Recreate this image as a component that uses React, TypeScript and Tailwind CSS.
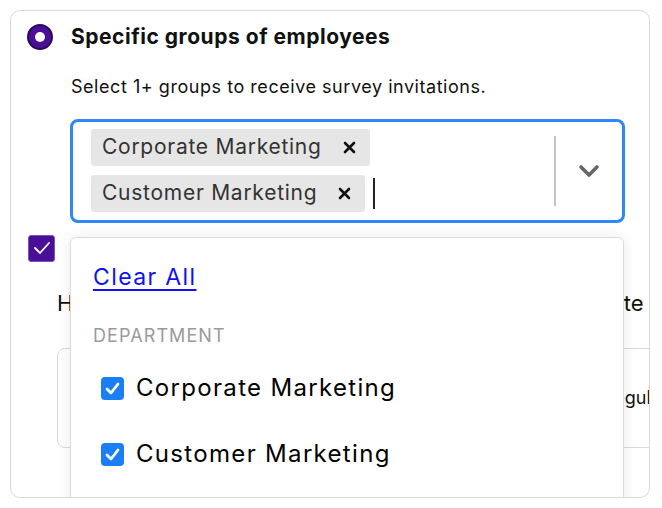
import React from 'react';

const FONT = { fontFamily: 'Inter, "Noto Sans", sans-serif' };

const groups = ['Corporate Marketing', 'Customer Marketing'];

function Chip({ label }: { label: string }) {
  return (
    <div className="flex h-[37px] items-center rounded-[3px] bg-[#e6e6e6] pl-[11px] pr-[14px]">
      <span className="text-[21px] tracking-[0.035em] text-[#333]">{label}</span>
      <svg className="ml-[21px]" width="13" height="13" viewBox="0 0 13 13">
        <path d="M2 2 L11 11 M11 2 L2 11" stroke="#111" strokeWidth="2.6" strokeLinecap="round" />
      </svg>
    </div>
  );
}

function BlueCheck() {
  return (
    <span className="flex h-[23px] w-[23px] items-center justify-center rounded-[4px] bg-[#1a7ef5]">
      <svg width="15" height="13" viewBox="0 0 15 13">
        <path d="M2 7 L6 11 L13 2" fill="none" stroke="#fff" strokeWidth="2.8" strokeLinecap="round" strokeLinejoin="round" />
      </svg>
    </span>
  );
}

function Dropdown() {
  return (
    <div className="absolute left-0 top-[118px] z-10 h-[300px] w-[554px] rounded-t-[6px] border border-[#dcdcdc] bg-white pl-[22px] pt-[22px] shadow-[0_0_14px_rgba(0,0,0,0.09)]">
      <a className="text-[23px] tracking-[0.06em] text-[#1010f0] underline decoration-[2px] underline-offset-[4px]" href="#">
        Clear All
      </a>
      <div className="mt-[28px] text-[18px] tracking-[0.06em] text-[#9a9a9a]">DEPARTMENT</div>
      <div className="mt-[21px] flex flex-col gap-[30px] pl-[8px]">
        {groups.map((g) => (
          <label key={g} className="flex items-center gap-[12px]">
            <BlueCheck />
            <span className="text-[24px] tracking-[0.055em] text-black">{g}</span>
          </label>
        ))}
      </div>
    </div>
  );
}

export default function App() {
  return (
    <div className="h-[508px] w-[662px] bg-white pl-[10px] pt-[10px]" style={FONT}>
      <div className="h-[488px] w-[640px] overflow-hidden rounded-[10px] border border-[#d9d9d9]">
        {/* radio + title */}
        <div className="flex items-center pl-[16px] pt-[10px]">
          <span className="flex h-[26px] w-[26px] items-center justify-center rounded-full border-2 border-[#2b0a5e] bg-[#4a0f96]">
            <span className="h-[10px] w-[10px] rounded-full bg-white" />
          </span>
          <span className="ml-[18px] text-[21px] font-bold tracking-[0.025em] text-[#111]">
            Specific groups of employees
          </span>
        </div>
        <div className="pl-[60px] pt-[20px] text-[18px] tracking-[0.03em] text-[#111]">
          Select 1+ groups to receive survey invitations.
        </div>

        {/* multi select */}
        <div className="relative ml-[59px] mt-[19px] w-[555px]">
          <div className="flex h-[104px] rounded-[8px] border-[3px] border-[#2f86f6]">
            <div className="flex flex-1 flex-col items-start gap-[9px] pl-[18px] pt-[7px]">
              <Chip label={groups[0]} />
              <div className="flex items-center">
                <Chip label={groups[1]} />
                <span className="ml-[8px] h-[31px] w-[2px] bg-[#222]" />
              </div>
            </div>
            <div className="my-[14px] w-[2px] bg-[#c4c4c4]" />
            <div className="flex w-[66px] items-center justify-center">
              <svg width="22" height="14" viewBox="0 0 22 14">
                <path d="M3 3 L11 11 L19 3" fill="none" stroke="#666" strokeWidth="3.6" strokeLinecap="round" strokeLinejoin="round" />
              </svg>
            </div>
          </div>
          <Dropdown />
        </div>

        {/* content under the dropdown */}
        <div className="flex items-center pl-[17px] pt-[12px]">
          <span className="flex h-[27px] w-[27px] items-center justify-center rounded-[3px] border border-[#7a55b8] bg-[#4a0f96]">
            <svg width="18" height="14" viewBox="0 0 18 14">
              <path d="M2 7 L7 12 L16 2" fill="none" stroke="#fff" strokeWidth="1.8" strokeLinecap="round" strokeLinejoin="round" />
            </svg>
          </span>
          <span className="ml-[16px] text-[21px] leading-[24px] text-[#111]">Include all members of selected groups</span>
        </div>
        <div className="flex items-center whitespace-nowrap pl-[46px] pt-[25px] text-[22px] text-[#111]">
          <span>How</span>
          <span className="ml-auto -mr-[14px]">rotate o</span>
        </div>
        <div className="ml-[46px] mt-[28px] flex h-[100px] w-[620px] items-center rounded-l-[8px] border border-[#d9d9d9] pl-[545px] whitespace-nowrap text-[18px] text-[#111]">
          Regular
        </div>
      </div>
    </div>
  );
}
